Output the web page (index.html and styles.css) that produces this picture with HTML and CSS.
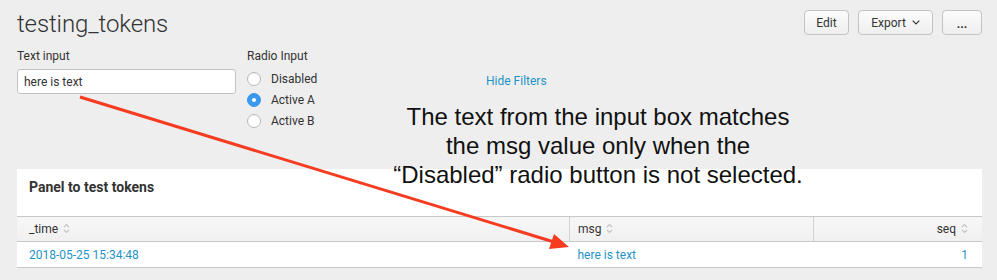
FILE: index.html
```html
<!DOCTYPE html>
<html lang="en">
<head>
    <meta charset="UTF-8">
    <title>testing_tokens</title>
    <link rel="stylesheet" href="styles.css">
</head>
<body>

    <div class="dashboard">

        <!-- title and actions -->
        <header class="dash-head">
            <h1 class="dash-title">testing_tokens</h1>
            <div class="dash-actions">
                <button class="btn btn-edit">Edit</button>
                <button class="btn btn-export">Export
                    <svg class="caret" width="8" height="5" viewBox="0 0 8 5"><path d="M0.7 0.7 L4 4 L7.3 0.7" fill="none" stroke="#333" stroke-width="1.1"/></svg>
                </button>
                <button class="btn btn-more">...</button>
            </div>
        </header>

        <!-- inputs -->
        <div class="fieldset">
            <div class="input input-text">
                <label class="input-label">Text input</label>
                <input class="text-box" type="text" value="here is text">
            </div>
            <div class="input input-radio">
                <label class="input-label">Radio Input</label>
                <div class="choice"><span class="radio"></span>Disabled</div>
                <div class="choice"><span class="radio checked"></span>Active A</div>
                <div class="choice"><span class="radio"></span>Active B</div>
            </div>
            <a class="hide-filters">Hide Filters</a>
        </div>

        <!-- panel -->
        <div class="panel">
            <h2 class="panel-title">Panel to test tokens</h2>
            <table class="results">
                <thead>
                    <tr>
                        <th class="col-time">_time <span class="sort"></span></th>
                        <th class="col-msg">msg <span class="sort"></span></th>
                        <th class="col-seq num">seq <span class="sort"></span></th>
                    </tr>
                </thead>
                <tbody>
                    <tr>
                        <td>2018-05-25 15:34:48</td>
                        <td class="msg">here is text</td>
                        <td class="num">1</td>
                    </tr>
                </tbody>
            </table>
        </div>

    </div>

    <!-- annotation -->
    <p class="note">The text from the input box matches<br>the msg value only when the<br>“Disabled” radio button is not selected.</p>

    <svg class="arrow" width="997" height="280" viewBox="0 0 997 280">
        <line x1="80" y1="97" x2="554" y2="242" stroke="#f53b20" stroke-width="3"/>
        <polygon points="569,247 549,249 554,234" fill="#f53b20"/>
    </svg>

</body>
</html>
```

FILE: styles.css
```css
/* page */
body {
    margin: 0;
    background: #eeeeee;
    font-family: Roboto, "Liberation Sans", sans-serif;
    font-size: 12px;
    color: #333;
    position: relative;
    height: 280px;
    overflow: hidden;
}

.dashboard {
    padding: 10px 15px 0 17px;
}

/* header */
.dash-head {
    display: flex;
    justify-content: space-between;
    align-items: flex-start;
}

.dash-title {
    margin: 0;
    font-size: 24px;
    line-height: 26px;
    font-weight: 300;
    letter-spacing: -0.1px;
    color: #333;
    padding-top: 1px;
}

.dash-actions {
    display: flex;
    gap: 9px;
}

.btn {
    height: 25px;
    padding: 0;
    font-family: Roboto, "Liberation Sans", sans-serif;
    font-size: 12px;
    color: #333;
    background: linear-gradient(#fbfbfb, #efefef);
    border: 1px solid #c3c3c3;
    border-radius: 4px;
    display: flex;
    align-items: center;
    justify-content: center;
    gap: 6px;
}

.btn-edit { width: 45px; }
.btn-export { width: 75px; }
.btn-more { width: 40px; font-weight: bold; padding-top: 3px; }

/* inputs */
.fieldset {
    display: flex;
    margin-top: 11px;
}

.input-label {
    display: block;
    line-height: 16px;
    color: #333;
}

.input-text {
    width: 219px;
    margin-right: 11px;
}

.text-box {
    display: block;
    box-sizing: border-box;
    width: 219px;
    height: 25px;
    margin-top: 5px;
    padding: 0 6px;
    font-family: Roboto, "Liberation Sans", sans-serif;
    font-size: 12px;
    color: #333;
    background: #fff;
    border: 1px solid #c3c3c3;
    border-radius: 3px;
}

.input-radio {
    width: 239px;
}

.input-radio .input-label {
    margin-bottom: 4px;
}

.choice {
    display: flex;
    align-items: center;
    gap: 10px;
    height: 21px;
}

.radio {
    box-sizing: border-box;
    width: 14px;
    height: 14px;
    border-radius: 50%;
    background: #fff;
    border: 1px solid #b9b9b9;
    box-shadow: inset 0 1px 1px rgba(0, 0, 0, 0.05);
    display: flex;
    align-items: center;
    justify-content: center;
}

.radio.checked {
    background: #3b99f1;
    border-color: #3b99f1;
}

.radio.checked:after {
    content: "";
    width: 4px;
    height: 4px;
    border-radius: 50%;
    background: #fff;
}

.hide-filters {
    margin-top: 25px;
    line-height: 16px;
    height: 16px;
    color: #1e93c6;
}

/* panel */
.panel {
    margin-top: 38px;
    background: #fff;
}

.panel-title {
    margin: 0;
    padding: 8px 12px 19px;
    font-size: 14px;
    line-height: 20px;
    font-weight: bold;
    color: #333;
}

.results {
    width: 100%;
    border-collapse: collapse;
}

.results th {
    height: 24px;
    padding: 0 12px;
    text-align: left;
    font-weight: normal;
    color: #333;
    background: linear-gradient(#f7f7f7, #f0f0f0);
    border-top: 1px solid #c8c8c8;
    border-bottom: 1px solid #c8c8c8;
}

.results th + th {
    border-left: 1px solid #d3d3d3;
}

.col-time { width: 528px; }
.col-msg { width: 223px; }

.results .col-msg,
.results .msg {
    padding-left: 8px;
}

.results td {
    height: 25px;
    padding: 0 12px;
    color: #1e93c6;
    border-bottom: 1px solid #c8c8c8;
}

.results .num {
    text-align: right;
    padding-right: 14px;
}

.sort {
    display: inline-block;
    width: 7px;
    height: 11px;
    vertical-align: -1px;
    margin-left: 2px;
    background: url("data:image/svg+xml;utf8,<svg xmlns='http://www.w3.org/2000/svg' width='7' height='11'><path d='M1 4 L3.5 1.5 L6 4 M1 7 L3.5 9.5 L6 7' fill='none' stroke='%23c4c4c4' stroke-width='1.2'/></svg>") no-repeat;
}

/* annotation over the page */
.note {
    position: absolute;
    top: 102px;
    left: 388px;
    width: 420px;
    margin: 0;
    text-align: center;
    font-family: "Liberation Sans", Arial, sans-serif;
    font-size: 24px;
    line-height: 29px;
    color: #111;
}

.arrow {
    position: absolute;
    top: 0;
    left: 0;
    pointer-events: none;
}
```
